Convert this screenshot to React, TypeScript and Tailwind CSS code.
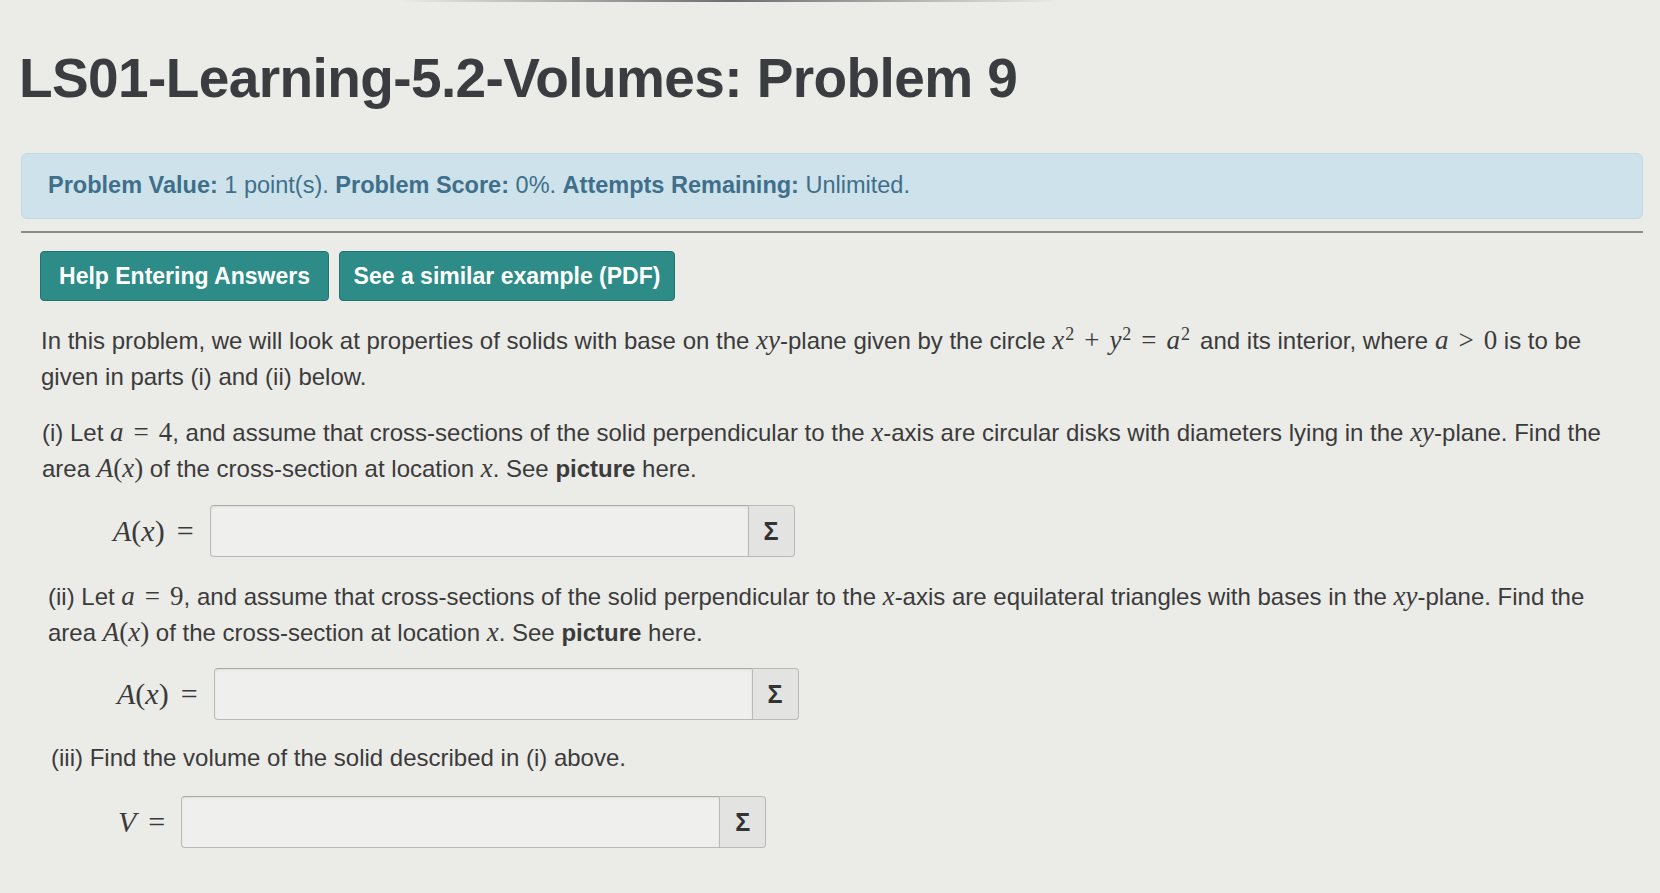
import React from "react";

const M = ({ children }: { children: React.ReactNode }) => (
  <span className="font-['Liberation_Serif',serif] italic text-[27px] leading-none">{children}</span>
);

const N = ({ children }: { children: React.ReactNode }) => (
  <span className="font-['Liberation_Serif',serif] text-[27px] leading-none">{children}</span>
);

const Op = ({ children }: { children: React.ReactNode }) => (
  <span className="font-['Liberation_Serif',serif] text-[27px] leading-none mx-[10px]">{children}</span>
);

const Sup = () => <sup className="font-['Liberation_Serif',serif] text-[18px] leading-none ml-[1px]">2</sup>;

const Ax = () => (
  <>
    <M>A</M>
    <N>(</N>
    <M>x</M>
    <N>)</N>
  </>
);

function AnswerRow({ label, offset, width }: { label: React.ReactNode; offset: string; width: string }) {
  return (
    <div className={`flex items-center ${offset}`}>
      <div className="font-['Liberation_Serif',serif] text-[30px] text-[#3a3a3a] mr-[16px] whitespace-nowrap">{label}</div>
      <div className={`flex h-[52px] ${width}`}>
        <div className="flex-1 rounded-l-[4px] border border-[#b9b9b7] border-t-[#a9a9a7] bg-[#efefed] shadow-[inset_0_1px_2px_rgba(0,0,0,0.08)]" />
        <div className="w-[46px] flex items-center justify-center rounded-r-[4px] border border-l-0 border-[#b9b9b7] bg-[#e3e3e1] text-[25px] font-bold text-[#333] font-['Liberation_Sans',sans-serif]">
          Σ
        </div>
      </div>
    </div>
  );
}

export default function App() {
  return (
    <div className="min-h-[893px] w-[1660px] bg-[#ebebe8] font-['Liberation_Sans',Arial,sans-serif] text-[#3b3b3b] overflow-hidden">
      <div className="h-[2px] ml-[400px] w-[660px] bg-gradient-to-r from-transparent via-[#6a6e70] to-transparent" />
      <div className="pt-[47px] pl-[19px]">
        <h1 className="text-[55px] leading-[59px] font-bold tracking-[-0.6px] text-[#3a3c40]">
          LS01-Learning-5.2-Volumes: Problem 9
        </h1>
      </div>

      <div className="ml-[21px] mt-[45px] w-[1622px] h-[66px] rounded-[6px] bg-[#cde2ea] border border-[#c0d8e1] flex items-center pl-[26px] text-[23.5px] text-[#3f6f8b]">
        <span className="font-bold">Problem Value:</span>
        <span>&nbsp;1 point(s).&nbsp;</span>
        <span className="font-bold">Problem Score:</span>
        <span>&nbsp;0%.&nbsp;</span>
        <span className="font-bold">Attempts Remaining:</span>
        <span>&nbsp;Unlimited.</span>
      </div>

      <div className="ml-[21px] mt-[12px] w-[1622px] h-[2px] bg-[#8d8d8b]" />

      <div className="ml-[40px] mt-[18px] flex gap-[10px]">
        <button className="h-[50px] w-[289px] rounded-[4px] bg-[#2d8c88] border border-[#24736f] text-white text-[23px] font-bold">
          Help Entering Answers
        </button>
        <button className="h-[50px] w-[336px] rounded-[4px] bg-[#2d8c88] border border-[#24736f] text-white text-[23px] font-bold">
          See a similar example (PDF)
        </button>
      </div>

      <div className="pl-[41px] text-[24px] leading-[36px]">
        <p className="mt-[22px] whitespace-nowrap">
          In this problem, we will look at properties of solids with base on the <M>xy</M>-plane given by the circle{" "}
          <M>x</M>
          <Sup />
          <Op>+</Op>
          <M>y</M>
          <Sup />
          <Op>=</Op>
          <M>a</M>
          <Sup />
          <span className="ml-[10px]">and its interior, where</span> <M>a</M>
          <Op>&gt;</Op>
          <N>0</N> is to be
          <br />
          given in parts (i) and (ii) below.
        </p>

        <p className="mt-[20px] ml-[1px] whitespace-nowrap">
          (i) Let <M>a</M>
          <Op>=</Op>
          <N>4</N>, and assume that cross-sections of the solid perpendicular to the <M>x</M>
          -axis are circular disks with diameters lying in the <M>xy</M>-plane. Find the
          <br />
          area <Ax /> of the cross-section at location <M>x</M>. See <span className="font-bold">picture</span> here.
        </p>

        <div className="mt-[18px]">
          <AnswerRow
            offset="ml-[72px]"
            width="w-[585px]"
            label={
              <>
                <i>A</i>(<i>x</i>)<span className="ml-[12px]">=</span>
              </>
            }
          />
        </div>

        <p className="mt-[22px] ml-[7px] whitespace-nowrap">
          (ii) Let <M>a</M>
          <Op>=</Op>
          <N>9</N>, and assume that cross-sections of the solid perpendicular to the <M>x</M>-axis are equilateral
          triangles with bases in the <M>xy</M>-plane. Find the
          <br />
          area <Ax /> of the cross-section at location <M>x</M>. See <span className="font-bold">picture</span> here.
        </p>

        <div className="mt-[17px]">
          <AnswerRow
            offset="ml-[76px]"
            width="w-[585px]"
            label={
              <>
                <i>A</i>(<i>x</i>)<span className="ml-[12px]">=</span>
              </>
            }
          />
        </div>

        <p className="mt-[20px] ml-[10px] whitespace-nowrap">(iii) Find the volume of the solid described in (i) above.</p>

        <div className="mt-[20px]">
          <AnswerRow
            offset="ml-[77px]"
            width="w-[585px]"
            label={
              <>
                <i>V</i>
                <span className="ml-[12px]">=</span>
              </>
            }
          />
        </div>
      </div>
    </div>
  );
}
